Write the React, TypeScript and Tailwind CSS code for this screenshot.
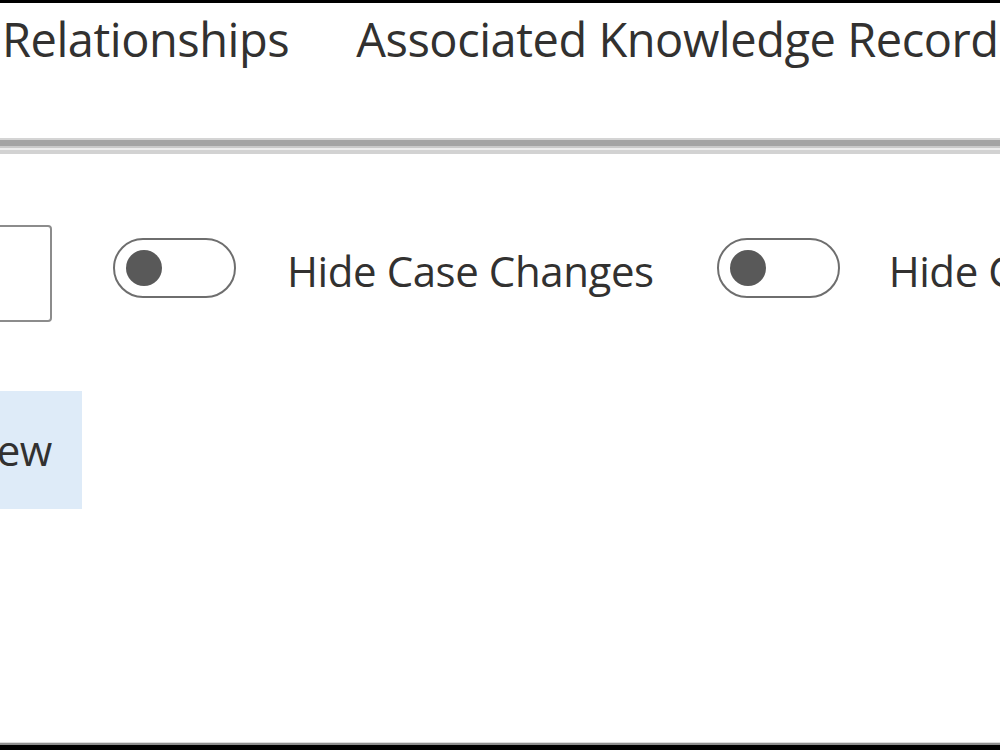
export default function App() {
  const font = { fontFamily: '"Open Sans", "Noto Sans", sans-serif' };

  const Toggle = () => (
    <div className="mt-[13px] flex h-[60px] w-[123px] shrink-0 items-center rounded-full border-2 border-[#6e6e6e] pl-[11px]">
      <div className="h-[36px] w-[36px] rounded-full bg-[#595959]" />
    </div>
  );

  return (
    <div
      className="flex h-[750px] w-[1000px] flex-col overflow-hidden bg-white text-[#323130]"
      style={font}
    >
      <div className="h-[3px] shrink-0 bg-black" />

      {/* tabs */}
      <div className="flex h-[135px] shrink-0 gap-[67px] whitespace-nowrap pl-[2px] pt-[13px] text-[47px] leading-none tracking-[-0.01em]">
        <span>Relationships</span>
        <span>Associated Knowledge Records</span>
      </div>

      <div className="h-[2px] shrink-0 bg-[#d4d4d4]" />
      <div className="h-[6px] shrink-0 bg-[#a3a3a3]" />
      <div className="h-[2px] shrink-0 bg-[#c9c9c9]" />
      <div className="h-[2px] shrink-0 bg-[#ececec]" />
      <div className="h-[4px] shrink-0 bg-[#d2d2d2]" />

      {/* filters */}
      <div className="mt-[71px] flex shrink-0 items-start whitespace-nowrap text-[42px] leading-none tracking-[-0.01em]">
        <div className="-ml-[20px] h-[97px] w-[72px] shrink-0 rounded-[4px] border-2 border-[#8c8c8c]" />
        <div className="ml-[61px]">
          <Toggle />
        </div>
        <span className="ml-[51px] mt-[25px]">Hide Case Changes</span>
        <div className="ml-[63px]">
          <Toggle />
        </div>
        <span className="ml-[49px] mt-[25px]">Hide Comments</span>
      </div>

      <div className="mt-[69px] flex shrink-0">
        <button className="-ml-[60px] flex h-[118px] w-[142px] items-center justify-end bg-[#deebf8] pr-[30px] text-[42px] leading-none tracking-[-0.01em]">
          View
        </button>
      </div>

      <div className="flex-1" />
      <div className="h-[1px] shrink-0 bg-[#dcdcdc]" />
      <div className="h-[2px] shrink-0 bg-[#8f8f8f]" />
      <div className="h-[5px] shrink-0 bg-black" />
    </div>
  );
}
